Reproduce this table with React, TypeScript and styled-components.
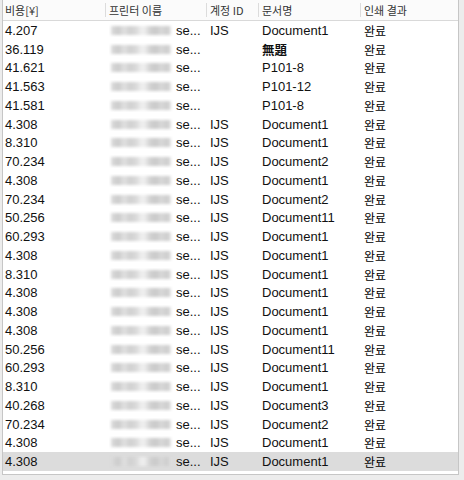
import React from "react";
import styled, { createGlobalStyle } from "styled-components";

const Global = createGlobalStyle`
  html, body { margin: 0; padding: 0; background: #ececec; }
  body { font-family: "Liberation Sans", "Noto Sans CJK KR", sans-serif; }
`;

const Frame = styled.div`
  width: 464px;
  height: 480px;
  overflow: hidden;
  background: #ececec;
  display: flex;
  flex-direction: column;
`;

const Table = styled.div`
  margin: 0 5px 0 2px;
  height: 474px;
  background: #fff;
  border-left: 1px solid #c6c6c6;
  border-right: 1px solid #c6c6c6;
  border-bottom: 1px solid #c6c6c6;
  overflow: hidden;
  display: flex;
  flex-direction: column;
`;

const cols = "102px 101px 52px 102px 1fr";

const HeaderRow = styled.div`
  display: grid;
  grid-template-columns: ${cols};
  height: 20px;
  flex: none;
  border-bottom: 1px solid #d9d9d9;
  background: #fbfbfb;
  align-items: center;
`;

const HeaderCell = styled.div<{ $first?: boolean }>`
  font-family: "Noto Sans CJK KR", "Liberation Sans", sans-serif;
  font-size: 11px;
  color: #333;
  height: 14px;
  line-height: 14px;
  padding-left: ${(p) => (p.$first ? "2px" : "3px")};
  border-left: ${(p) => (p.$first ? "none" : "1px solid #dcdcdc")};
  white-space: nowrap;
  overflow: hidden;
`;

const Row = styled.div<{ $selected?: boolean }>`
  display: grid;
  grid-template-columns: ${cols};
  height: 18.75px;
  flex: none;
  align-items: center;
  background: ${(p) => (p.$selected ? "#dcdcdc" : "#fff")};
`;

const Cell = styled.div<{ $first?: boolean }>`
  font-size: 13px;
  color: #111;
  padding-left: ${(p) => (p.$first ? "2px" : "4px")};
  white-space: nowrap;
  overflow: hidden;
  display: flex;
  align-items: center;
`;

const CjkText = styled.span`
  font-family: "Noto Sans CJK KR", sans-serif;
  font-size: 12px;
  font-weight: 400;
  color: #000;
`;

const JpText = styled.span`
  font-family: "Noto Sans CJK JP", sans-serif;
  font-size: 12.5px;
  font-weight: 700;
`;

const BlurWrap = styled.span`
  display: inline-block;
  width: 64px;
  height: 13px;
  margin-right: 3px;
  overflow: hidden;
  flex: none;
`;

const Blur = styled.span`
  display: block;
  width: 60px;
  height: 9px;
  margin: 2px 0 0 2px;
  background:
    linear-gradient(90deg,
      #dcdcdc 0%, #cbcbcb 12%, #e0e0e0 22%, #d0d0d0 32%, #dadada 42%,
      #ededed 50%, #eeeeee 56%,
      #d4d4d4 64%, #c9c9c9 74%, #d8d8d8 84%, #cdcdcd 94%, #e2e2e2 100%);
  filter: blur(1.6px);
`;

type R = { cost: string; acct: string; doc: string };

const rows: R[] = [
  { cost: "4.207", acct: "IJS", doc: "Document1" },
  { cost: "36.119", acct: "", doc: "無題" },
  { cost: "41.621", acct: "", doc: "P101-8" },
  { cost: "41.563", acct: "", doc: "P101-12" },
  { cost: "41.581", acct: "", doc: "P101-8" },
  { cost: "4.308", acct: "IJS", doc: "Document1" },
  { cost: "8.310", acct: "IJS", doc: "Document1" },
  { cost: "70.234", acct: "IJS", doc: "Document2" },
  { cost: "4.308", acct: "IJS", doc: "Document1" },
  { cost: "70.234", acct: "IJS", doc: "Document2" },
  { cost: "50.256", acct: "IJS", doc: "Document11" },
  { cost: "60.293", acct: "IJS", doc: "Document1" },
  { cost: "4.308", acct: "IJS", doc: "Document1" },
  { cost: "8.310", acct: "IJS", doc: "Document1" },
  { cost: "4.308", acct: "IJS", doc: "Document1" },
  { cost: "4.308", acct: "IJS", doc: "Document1" },
  { cost: "4.308", acct: "IJS", doc: "Document1" },
  { cost: "50.256", acct: "IJS", doc: "Document11" },
  { cost: "60.293", acct: "IJS", doc: "Document1" },
  { cost: "8.310", acct: "IJS", doc: "Document1" },
  { cost: "40.268", acct: "IJS", doc: "Document3" },
  { cost: "70.234", acct: "IJS", doc: "Document2" },
  { cost: "4.308", acct: "IJS", doc: "Document1" },
  { cost: "4.308", acct: "IJS", doc: "Document1" },
];

export default function App() {
  return (
    <>
      <Global />
      <Frame>
        <Table>
          <HeaderRow>
            <HeaderCell $first>비용[¥]</HeaderCell>
            <HeaderCell>프린터 이름</HeaderCell>
            <HeaderCell>계정 ID</HeaderCell>
            <HeaderCell>문서명</HeaderCell>
            <HeaderCell>인쇄 결과</HeaderCell>
          </HeaderRow>
          {rows.map((r, i) => (
            <Row key={i} $selected={i === 23}>
              <Cell $first>{r.cost}</Cell>
              <Cell>
                <BlurWrap>
                  <Blur />
                </BlurWrap>
                se...
              </Cell>
              <Cell>{r.acct}</Cell>
              <Cell>{r.doc === "無題" ? <JpText>{r.doc}</JpText> : r.doc}</Cell>
              <Cell>
                <CjkText>완료</CjkText>
              </Cell>
            </Row>
          ))}
        </Table>
      </Frame>
    </>
  );
}
